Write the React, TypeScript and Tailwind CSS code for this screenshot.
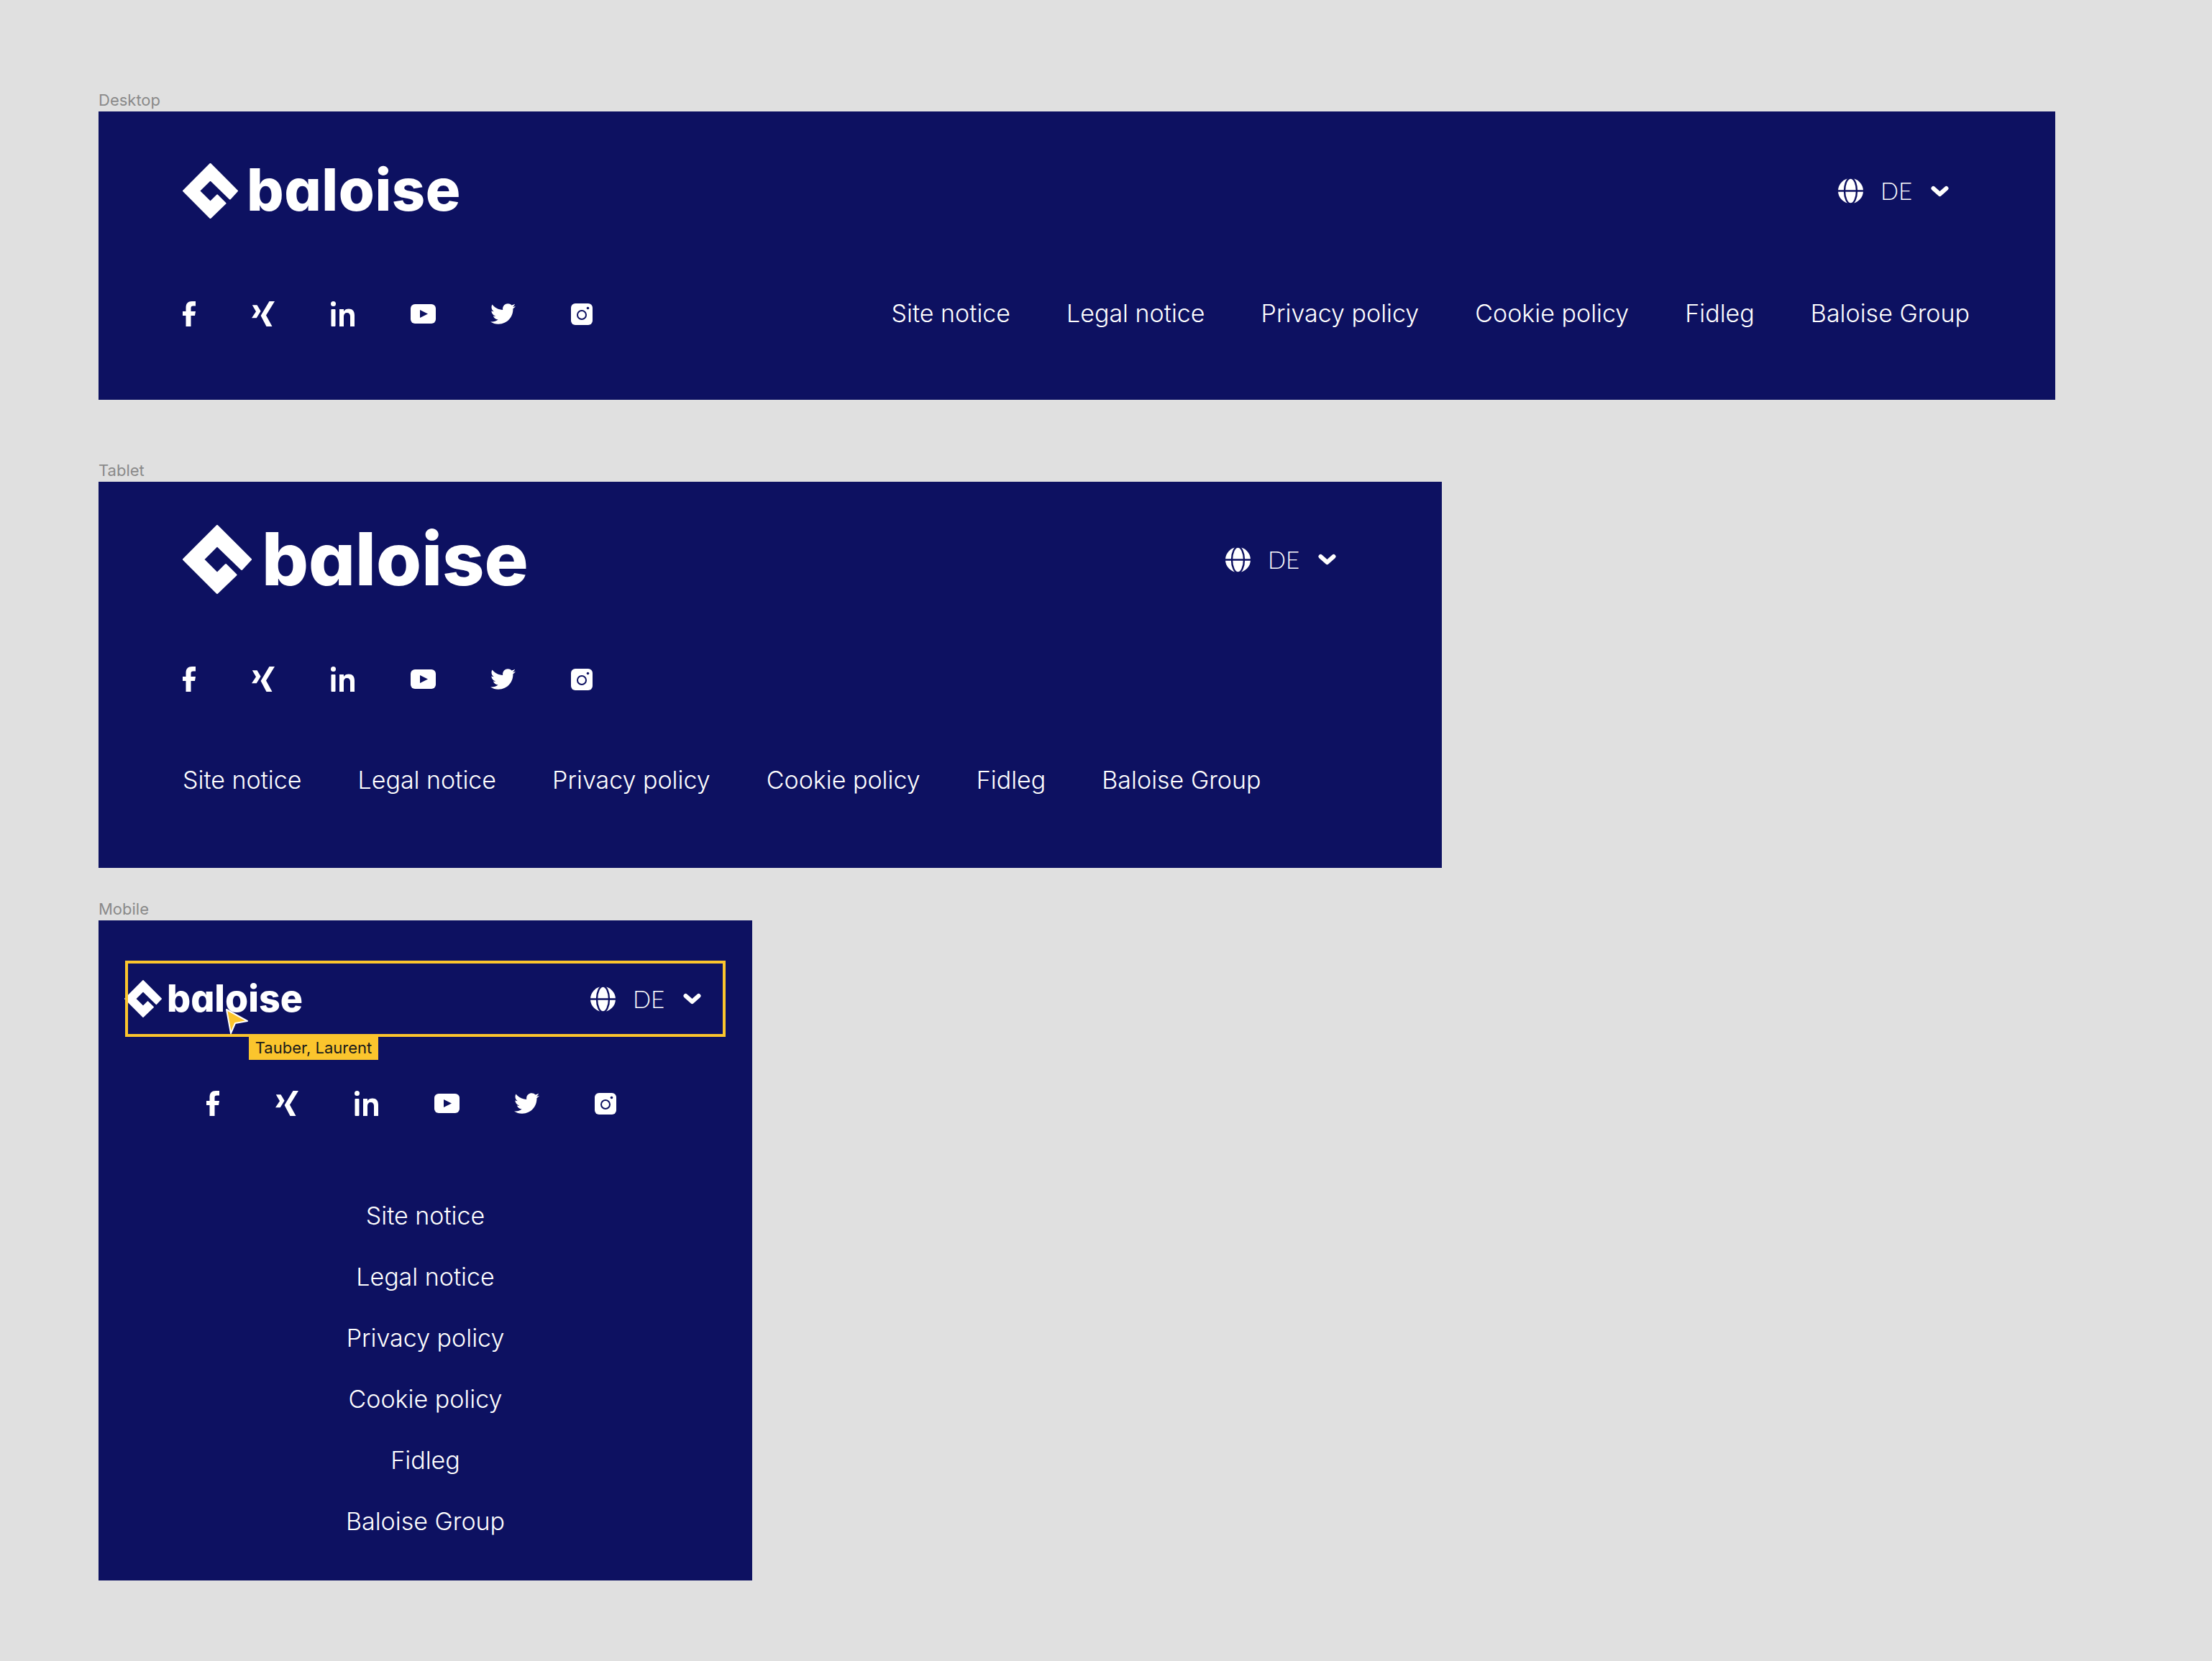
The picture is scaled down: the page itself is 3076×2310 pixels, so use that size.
import { FaTwitter } from "react-icons/fa";

const links = ["Site notice", "Legal notice", "Privacy policy", "Cookie policy", "Fidleg", "Baloise Group"];

function Mark({ size }: { size: number }) {
  return (
    <svg width={size} height={size} viewBox="0 0 96 96" className="shrink-0">
      <path
        d="M48 1.500 94.500 48 82 61.500 48 28.500 28.500 48 48 67.500 60 55.500 74 69.500 48 94.500 1.500 48Z"
        fill="#fff"
        stroke="#fff"
        strokeWidth="3"
        strokeLinejoin="round"
      />
    </svg>
  );
}

function Logo({ mark, text, gap, height }: { mark: number; text: string; gap: string; height: string }) {
  return (
    <div className={`flex items-center ${gap} ${height}`}>
      <Mark size={mark} />
      <span
        className={`font-['Inter',sans-serif] font-extrabold leading-none text-white [font-feature-settings:'cv11'] ${text}`}
      >
        baloise
      </span>
    </div>
  );
}

function Globe() {
  return (
    <svg width="35" height="35" viewBox="0 0 35 35" className="shrink-0">
      <circle cx="17.500" cy="17.500" r="17.500" fill="#fff" />
      <ellipse cx="17.500" cy="17.500" rx="8.500" ry="18" fill="none" stroke="#0d1161" strokeWidth="2.400" />
      <path d="M0 17.500h35" stroke="#0d1161" strokeWidth="2.500" />
    </svg>
  );
}

function Lang() {
  return (
    <div className="flex items-center">
      <Globe />
      <span className="ml-[24px] w-[41px] font-['Lato',sans-serif] text-[33px] leading-none font-light text-white">DE</span>
      <svg width="25" height="16" viewBox="0 0 25 16" className="ml-[29px] shrink-0">
        <path d="M3.500 4 12.500 12 21.500 4" fill="none" stroke="#fff" strokeWidth="6" strokeLinecap="round" strokeLinejoin="round" />
      </svg>
    </div>
  );
}

function Socials() {
  return (
    <div className="flex h-[35px] items-center gap-[78px]">
      <svg width="18" height="35" viewBox="0 0 18 35" fill="#fff" className="shrink-0">
        <path d="M4.500 35V20H0v-6h4.500V9c0-6 3-9 8.500-9h5v6.500h-3.500c-2 0-3 .8-3 3V14H18l-1 6h-5.500v15Z" />
      </svg>
      <svg width="32" height="35" viewBox="0 0 32 35" fill="#fff" className="shrink-0">
        <path d="M.8 5.300H7.500L12.600 13.700 6.700 23.300H0L6 14.300Z" />
        <path d="M24.500 0H32L20 19.500 28.500 35H20.500L12.600 20Z" />
      </svg>
      <svg width="33" height="35" viewBox="0 0 33 35" fill="#fff" className="shrink-0">
        <circle cx="3.500" cy="3.500" r="3.500" />
        <rect x="0.500" y="11" width="6" height="24" rx="1" />
        <path d="M12 35V11h6v3c1.500-2.500 4-3.500 7-3.500 5 0 8 3 8 9V35h-6V21c0-3-1.500-5-4.500-5S18 18 18 21v14Z" />
      </svg>
      <svg width="35" height="27" viewBox="0 0 35 27" className="shrink-0">
        <rect width="35" height="27" rx="6" fill="#fff" />
        <path d="M13 8 24 13.500 13 19Z" fill="#0d1161" />
      </svg>
      <FaTwitter className="-ml-[2px] h-[35px] w-[35px] shrink-0 text-white" />
      <svg width="30" height="30" viewBox="0 0 30 30" className="-ml-[1px] shrink-0">
        <rect width="30" height="30" rx="6" fill="#fff" />
        <circle cx="15" cy="16" r="6" fill="none" stroke="#0d1161" strokeWidth="2" />
        <circle cx="23.500" cy="6.500" r="1.800" fill="#0d1161" />
      </svg>
    </div>
  );
}

function Links({ className }: { className: string }) {
  return (
    <nav className={className}>
      {links.map((l) => (
        <a key={l} className="h-[48px] text-[34px] leading-[48px] font-light whitespace-nowrap text-white">
          {l}
        </a>
      ))}
    </nav>
  );
}

function Label({ children }: { children: string }) {
  return <div className="h-[24px] text-[22px] leading-[17px] text-[#8a8a8a]">{children}</div>;
}

export default function App() {
  return (
    <div className="h-[2310px] w-[3076px] overflow-hidden bg-[#e0e0e0] pt-[131px] pl-[137px] font-['Inter',sans-serif]">
      <Label>Desktop</Label>
      <section className="h-[401px] w-[2721px] bg-[#0d1161] pt-[72px] pr-[119px] pl-[117px]">
        <div className="flex items-center justify-between pr-[29px]">
          <Logo mark={77} height="h-[77px]" text="-mt-[3px] text-[81px] tracking-[0.5px]" gap="gap-[12px]" />
          <Lang />
        </div>
        <div className="mt-[115px] flex h-[35px] items-center justify-between">
          <Socials />
          <Links className="-mt-[2px] flex gap-[78px]" />
        </div>
      </section>

      <div className="mt-[90px]">
        <Label>Tablet</Label>
      </div>
      <section className="h-[537px] w-[1868px] bg-[#0d1161] pt-[60px] pr-[147px] pl-[117px]">
        <div className="flex items-center justify-between">
          <Logo mark={96} height="h-[96px]" text="-mt-[3px] text-[102px]" gap="gap-[14px]" />
          <Lang />
        </div>
        <div className="mt-[101px]">
          <Socials />
        </div>
        <Links className="mt-[99px] flex gap-[78px]" />
      </section>

      <div className="mt-[49px]">
        <Label>Mobile</Label>
      </div>
      <section className="relative h-[918px] w-[909px] bg-[#0d1161] pt-[83px]">
        <div className="flex items-center justify-between pr-[71px] pl-[36px]">
          <Logo mark={52} height="h-[52px]" text="text-[52px]" gap="gap-[7px]" />
          <Lang />
        </div>
        <div className="mt-[102px] pl-[150px]">
          <Socials />
        </div>
        <Links className="mt-[115px] flex flex-col items-center gap-[37px]" />

        {/* comment overlay */}
        <div className="absolute top-[56px] left-[37px] h-[106px] w-[835px] border-4 border-[#fbc52d]" />
        <svg width="34" height="38" viewBox="0 0 34 38" className="absolute top-[122px] left-[176px]">
          <path d="M2 2 31 18 14 21 8 35Z" fill="#fbc52d" stroke="#fff" strokeWidth="2" strokeLinejoin="round" />
        </svg>
        <div className="absolute top-[162px] left-[209px] flex h-[32px] w-[180px] items-center justify-center bg-[#fbc52d] pb-[2px] text-[22px] text-[#1a1a1a]">
          Tauber, Laurent
        </div>
      </section>
    </div>
  );
}
